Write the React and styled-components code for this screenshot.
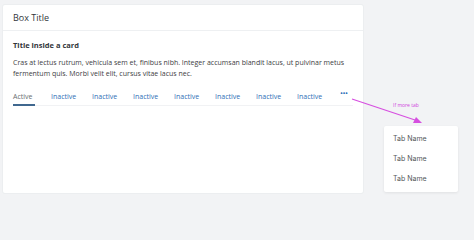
import React from 'react';
import styled, { createGlobalStyle } from 'styled-components';

const GlobalStyle = createGlobalStyle`
  html, body {
    margin: 0;
    padding: 0;
    background: #f2f3f5;
    height: 208px;
    overflow: hidden;
  }
  body {
    font-family: "Open Sans", "Noto Sans", sans-serif;
    color: #32363a;
  }
`;

const Page = styled.div`
  position: relative;
  width: 474px;
  height: 208px;
  overflow: hidden;
  display: flex;
  align-items: flex-start;
  padding: 5px 0 0 3px;
  box-sizing: border-box;
`;

const Card = styled.section`
  width: 360px;
  height: 188px;
  background: #fff;
  border-radius: 2px;
  box-shadow: 0 0 0 1px #eceef0;
  display: flex;
  flex-direction: column;
`;

const CardHeader = styled.header`
  height: 25px;
  display: flex;
  align-items: center;
  padding: 0 10px;
  border-bottom: 1px solid #eef0f2;
  font-size: 9px;
  color: #32363a;
`;

const CardBody = styled.div`
  padding: 8px 10px 0;
  display: flex;
  flex-direction: column;
`;

const InnerTitle = styled.h3`
  margin: 0;
  font-size: 7.5px;
  font-weight: 700;
  line-height: 12px;
`;

const Paragraph = styled.p`
  margin: 6px 0 0;
  font-size: 7px;
  line-height: 11px;
  color: #3d4043;
`;

const TabBar = styled.nav`
  margin-top: 8px;
  display: flex;
  align-items: flex-end;
  border-bottom: 1px solid #f1f2f4;
`;

const Tab = styled.button`
  all: unset;
  width: ${({ $active }) => ($active ? '38px' : '41px')};
  height: 18px;
  font-size: 7px;
  color: ${({ $active }) => ($active ? '#6a6d70' : '#2f6fb7')};
  position: relative;
  cursor: pointer;
  &::after {
    content: '';
    display: ${({ $active }) => ($active ? 'block' : 'none')};
    position: absolute;
    left: 0;
    bottom: -1px;
    width: 22px;
    height: 2px;
    background: #40688f;
  }
`;

const More = styled.span`
  font-size: 8px;
  color: #2f6fb7;
  height: 18px;
  letter-spacing: -0.5px;
  padding-left: 2px;
`;

const Menu = styled.ul`
  position: absolute;
  left: 384px;
  top: 126px;
  width: 74px;
  margin: 0;
  padding: 2px 0 4px;
  list-style: none;
  background: #fff;
  border-radius: 2px;
  box-shadow: 0 1px 3px rgba(0, 0, 0, 0.08);
  box-sizing: border-box;
`;

const MenuItem = styled.li`
  height: 20px;
  display: flex;
  align-items: center;
  padding-left: 9px;
  font-family: "Inter", "Liberation Sans", sans-serif;
  font-size: 7px;
  color: #54575a;
`;

const Note = styled.span`
  position: absolute;
  left: 393px;
  top: 102px;
  font-size: 5px;
  color: #d045dd;
`;

const Arrow = styled.svg`
  position: absolute;
  left: 0;
  top: 0;
  pointer-events: none;
`;

const tabs = ['Active', 'Inactive', 'Inactive', 'Inactive', 'Inactive', 'Inactive', 'Inactive', 'Inactive'];

export default function App() {
  return (
    <>
      <GlobalStyle />
      <Page>
        <Card>
          <CardHeader>Box Title</CardHeader>
          <CardBody>
            <InnerTitle>Title inside a card</InnerTitle>
            <Paragraph>
              Cras at lectus rutrum, vehicula sem et, finibus nibh. Integer accumsan blandit lacus, ut pulvinar metus
              fermentum quis. Morbi velit elit, cursus vitae lacus nec.
            </Paragraph>
            <TabBar>
              {tabs.map((t, i) => (
                <Tab key={i} $active={i === 0}>{t}</Tab>
              ))}
              <More>•••</More>
            </TabBar>
          </CardBody>
        </Card>
        <Note>If more tab</Note>
        <Arrow width="474" height="208" viewBox="0 0 474 208">
          <line x1="352" y1="99" x2="418" y2="121" stroke="#d64fe0" strokeWidth="1.2" />
          <polygon points="422,123 413,123 416,117" fill="#d64fe0" />
        </Arrow>
        <Menu>
          <MenuItem>Tab Name</MenuItem>
          <MenuItem>Tab Name</MenuItem>
          <MenuItem>Tab Name</MenuItem>
        </Menu>
      </Page>
    </>
  );
}
